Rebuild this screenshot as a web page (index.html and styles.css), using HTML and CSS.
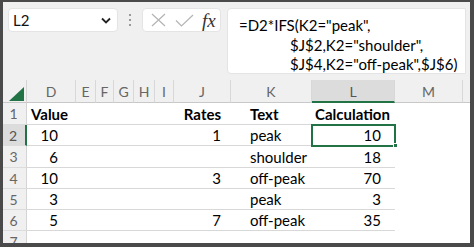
FILE: index.html
```html
<!DOCTYPE html>
<html>
<head>
<meta charset="utf-8">
<link rel="stylesheet" href="styles.css">
</head>
<body>
<div class="frame">
  <div class="toolbar">
    <div class="namebox">
      <span class="name">L2</span>
      <svg class="chev" width="10" height="7" viewBox="0 0 10 7"><path d="M1 1.5 L5 5.5 L9 1.5" fill="none" stroke="#222" stroke-width="1.8"/></svg>
    </div>
    <div class="dots"><i></i><i></i><i></i></div>
    <div class="fxbox">
      <svg class="ico" width="15" height="14" viewBox="0 0 15 14"><path d="M1 1 L14 13 M14 1 L1 13" stroke="#b4b4b4" stroke-width="1.2" fill="none"/></svg>
      <svg class="ico" width="19" height="13" viewBox="0 0 19 13"><path d="M1 6.5 L6.5 12 L18 1" stroke="#b4b4b4" stroke-width="1.2" fill="none"/></svg>
      <span class="fx">fx</span>
    </div>
    <div class="formula">
      <div class="fl">=D2*IFS(K2="peak",</div>
      <div class="fl indent">$J$2,K2="shoulder",</div>
      <div class="fl indent">$J$4,K2="off-peak",$J$6)</div>
    </div>
  </div>
  <div class="sheet">
    <div class="corner"><svg width="15" height="14" viewBox="0 0 15 14"><path d="M15 0 L15 14 L0 14 Z" fill="#217346"/></svg></div>
    <div class="ch">D</div><div class="ch">E</div><div class="ch">F</div><div class="ch">G</div><div class="ch">H</div><div class="ch">I</div><div class="ch">J</div><div class="ch">K</div><div class="ch sel">L</div><div class="ch">M</div><div class="ch last"></div>

    <div class="rh">1</div>
    <div class="c d b l">Value</div><div class="c"></div><div class="c"></div><div class="c"></div><div class="c"></div><div class="c"></div>
    <div class="c j b">Rates</div><div class="c k b">Text</div><div class="c lc b left">Calculation</div><div class="e"></div><div class="e"></div>

    <div class="rh sel">2</div>
    <div class="c d">10</div><div class="c"></div><div class="c"></div><div class="c"></div><div class="c"></div><div class="c"></div>
    <div class="c j">1</div><div class="c k">peak</div><div class="c lc active">10<span class="handle"></span></div><div class="e"></div><div class="e"></div>

    <div class="rh">3</div>
    <div class="c d">6</div><div class="c"></div><div class="c"></div><div class="c"></div><div class="c"></div><div class="c"></div>
    <div class="c j"></div><div class="c k">shoulder</div><div class="c lc">18</div><div class="e"></div><div class="e"></div>

    <div class="rh">4</div>
    <div class="c d">10</div><div class="c"></div><div class="c"></div><div class="c"></div><div class="c"></div><div class="c"></div>
    <div class="c j">3</div><div class="c k">off-peak</div><div class="c lc">70</div><div class="e"></div><div class="e"></div>

    <div class="rh">5</div>
    <div class="c d">3</div><div class="c"></div><div class="c"></div><div class="c"></div><div class="c"></div><div class="c"></div>
    <div class="c j"></div><div class="c k">peak</div><div class="c lc">3</div><div class="e"></div><div class="e"></div>

    <div class="rh">6</div>
    <div class="c d">5</div><div class="c"></div><div class="c"></div><div class="c"></div><div class="c"></div><div class="c"></div>
    <div class="c j">7</div><div class="c k">off-peak</div><div class="c lc">35</div><div class="e"></div><div class="e"></div>

    <div class="rh">7</div>
    <div class="e"></div><div class="e"></div><div class="e"></div><div class="e"></div><div class="e"></div><div class="e"></div>
    <div class="e"></div><div class="e"></div><div class="e"></div><div class="e"></div><div class="e"></div>
  </div>
</div>
</body>
</html>
```
FILE: styles.css
```css
* { box-sizing: border-box; }
html, body { margin: 0; padding: 0; }
body {
  width: 474px;
  height: 247px;
  background: #4a4a4a;
  font-family: Lato, "Open Sans", sans-serif;
  overflow: hidden;
}
.frame {
  margin: 2px 4px 0 3px;
  width: 467px;
  height: 241px;
  background: #f0f0f0;
  overflow: hidden;
}
.toolbar {
  height: 78px;
  display: flex;
  align-items: flex-start;
  padding: 6px 4px 0 5px;
}
.namebox {
  width: 110px;
  height: 24px;
  background: #fff;
  border-radius: 4px;
  border: 1px solid #e4e4e4;
  display: flex;
  align-items: center;
  justify-content: space-between;
  padding: 0 6px 0 4px;
}
.name { font-size: 15px; color: #111; }
.chev { margin-top: 1px; }
.dots {
  width: 24px;
  height: 24px;
  display: flex;
  flex-direction: column;
  align-items: center;
  justify-content: center;
  gap: 3px;
}
.dots i { display: block; width: 2px; height: 2px; background: #9a9a9a; }
.fxbox {
  width: 79px;
  height: 24px;
  background: #fff;
  border-radius: 4px;
  border: 1px solid #e4e4e4;
  display: flex;
  align-items: center;
  padding: 0 4px 0 8px;
  gap: 9px;
}
.ico { flex: none; }
.fx {
  font-family: "Liberation Serif", serif;
  font-style: italic;
  font-size: 19px;
  color: #333;
  margin-left: -1px;
  line-height: 1;
}
.formula {
  margin-left: 6px;
  flex: 1;
  height: 66px;
  background: #fff;
  border-radius: 4px 0 0 4px;
  border: 1px solid #e4e4e4;
  padding: 7px 0 0 11px;
  font-size: 15px;
  color: #000;
}
.fl { line-height: 19.5px; white-space: nowrap; }
.indent { padding-left: 51px; }

.sheet {
  display: grid;
  grid-template-columns: 24px 49px 20px 18px 20px 21px 19px 57px 81px 83px 68px 7px;
  grid-template-rows: 23px 22px 21px 22px 21px 21px 21px 22px;
  background: #fff;
  font-size: 15px;
}
.corner {
  background: #f0f0f0;
  border-right: 1px solid #d4d4d4;
  border-bottom: 1px solid #c8c8c8;
  display: flex;
  align-items: flex-end;
  justify-content: flex-end;
  padding: 0 2px 1px 0;
}
.ch {
  background: #f0f0f0;
  color: #666;
  font-size: 14px;
  display: flex;
  align-items: center;
  justify-content: center;
  border-right: 1px solid #d8d8d8;
  border-bottom: 1px solid #c8c8c8;
  padding-top: 1px;
}
.ch.sel {
  background: #dcdcdc;
  border-bottom: 2px solid #217346;
  color: #555;
}
.ch.last { border-right: none; }
.rh {
  background: #f0f0f0;
  color: #666;
  font-size: 14px;
  display: flex;
  align-items: center;
  justify-content: center;
  border-right: 1px solid #d4d4d4;
  border-bottom: 1px solid #dcdcdc;
  padding-right: 2px;
}
.rh.sel {
  background: #dcdcdc;
  border-right: 2px solid #217346;
  color: #555;
}
.c {
  display: flex;
  align-items: center;
  border-bottom: 1px solid #d8d8d8;
  color: #000;
  white-space: nowrap;
  position: relative;
}
.e { background: #fff; }
.b { font-weight: bold; }
.d { justify-content: flex-end; padding-right: 18px; }
.d.l { justify-content: flex-start; padding: 0 0 0 4px; overflow: visible; }
.j { justify-content: flex-end; padding-right: 10px; }
.k { padding-left: 19px; }
.lc { justify-content: flex-end; padding-right: 14px; }
.lc.left { justify-content: flex-start; padding: 0 0 0 3px; }
.active {
  outline: 2px solid #217346;
  outline-offset: -1px;
  z-index: 1;
}
.handle {
  position: absolute;
  right: -3px;
  bottom: -3px;
  width: 5px;
  height: 5px;
  background: #217346;
  border: 1px solid #fff;
}
```
